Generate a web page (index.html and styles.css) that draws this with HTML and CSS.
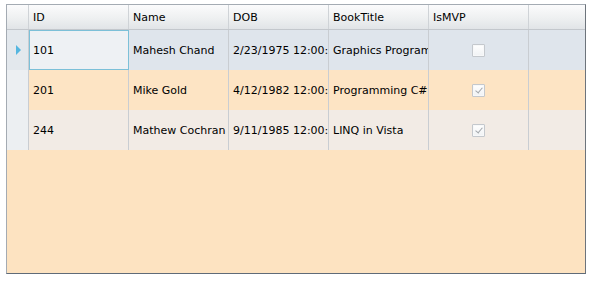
FILE: index.html
```html
<!DOCTYPE html>
<html lang="en">
<head>
    <meta charset="UTF-8">
    <title>DataGrid</title>
    <link rel="stylesheet" href="styles.css">
</head>
<body>
    <div class="grid">
        <div class="row header">
            <div class="rowhead"></div>
            <div class="cell">ID</div>
            <div class="cell">Name</div>
            <div class="cell">DOB</div>
            <div class="cell">BookTitle</div>
            <div class="cell">IsMVP</div>
            <div class="cell filler"></div>
        </div>

        <div class="row data selected">
            <div class="rowhead"><span class="arrow"></span></div>
            <div class="cell current">101</div>
            <div class="cell">Mahesh Chand</div>
            <div class="cell">2/23/1975 12:00:00 AM</div>
            <div class="cell">Graphics Programming</div>
            <div class="cell center"><span class="check"></span></div>
            <div class="cell filler"></div>
        </div>

        <div class="row data alt">
            <div class="rowhead"></div>
            <div class="cell">201</div>
            <div class="cell">Mike Gold</div>
            <div class="cell">4/12/1982 12:00:00 AM</div>
            <div class="cell">Programming C#</div>
            <div class="cell center"><span class="check on"></span></div>
            <div class="cell filler"></div>
        </div>

        <div class="row data plain">
            <div class="rowhead"></div>
            <div class="cell">244</div>
            <div class="cell">Mathew Cochran</div>
            <div class="cell">9/11/1985 12:00:00 AM</div>
            <div class="cell">LINQ in Vista</div>
            <div class="cell center"><span class="check on"></span></div>
            <div class="cell filler"></div>
        </div>
    </div>
</body>
</html>
```
FILE: styles.css
```css
body {
    margin: 0;
    background: #fff;
    font-family: "DejaVu Sans", Verdana, sans-serif;
    font-size: 11px;
    color: #000;
}
.grid {
    margin: 4px 0 0 6px;
    width: 578px;
    height: 268px;
    border: 1px solid #a4abb3;
    border-right-color: #6d747c;
    border-bottom-color: #5f6b78;
    background: #fde3c1;
    overflow: hidden;
}
.row {
    display: flex;
}
.rowhead {
    width: 21px;
    flex: none;
    border-right: 1px solid #c9cdd2;
    display: flex;
    align-items: center;
    justify-content: center;
}
.cell {
    width: 95px;
    flex: none;
    padding-left: 4px;
    border-right: 1px solid #c9cdd2;
    white-space: nowrap;
    overflow: hidden;
    display: flex;
    align-items: center;
}
.cell.filler {
    flex: 1;
    border-right: none;
}
.cell.center {
    justify-content: center;
    padding-left: 0;
    width: 99px;
}
.header {
    height: 24px;
    border-bottom: 1px solid #c3c7cc;
    background: linear-gradient(#fbfbfc, #eef0f1 55%, #e1e4e7);
}
.header .rowhead,
.header .cell {
    border-right-color: #cfd3d7;
}
.header .cell {
    padding-top: 1px;
}
.data {
    height: 40px;
}
.selected {
    background: #dfe5ec;
}
.selected .rowhead {
    background: #e3e8ed;
}
.alt {
    background: #fde4c4;
}
.plain {
    background: #f2ebe5;
}
.alt .rowhead,
.plain .rowhead {
    background: #eceff2;
}
.cell.current {
    background: #eef1f4;
    border: 1px solid #7cc0d8;
    padding-left: 3px;
    width: 95px;
}
.arrow {
    width: 0;
    height: 0;
    border-top: 5px solid transparent;
    border-bottom: 5px solid transparent;
    border-left: 5px solid #55b6e0;
    margin-left: 1px;
}
.check {
    width: 11px;
    height: 11px;
    border: 1px solid #c4c8cd;
    border-radius: 1px;
    background: linear-gradient(#ffffff, #f0f2f4);
    box-shadow: inset 0 0 0 1px #f7f8f9;
    position: relative;
}
.check.on::after {
    content: "";
    position: absolute;
    left: 4px;
    top: 1px;
    width: 3px;
    height: 6px;
    border-right: 1.5px solid #a3a7ac;
    border-bottom: 1.5px solid #a3a7ac;
    transform: rotate(40deg);
}
```
